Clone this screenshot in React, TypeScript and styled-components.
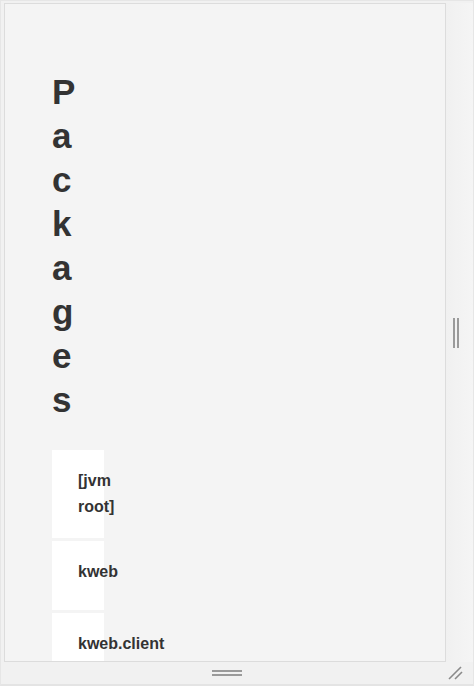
import React from "react";
import styled, { createGlobalStyle } from "styled-components";

const Global = createGlobalStyle`
  html, body { margin: 0; padding: 0; background: #f4f4f4; }
  body { font-family: "Liberation Sans", Arial, sans-serif; }
`;

const Frame = styled.div`
  width: 474px;
  height: 686px;
  box-sizing: border-box;
  border: 1px solid #e6e6e6;
  border-bottom: 2px solid #e4e4e4;
  background: #f1f1f1;
  display: grid;
  grid-template-columns: 1fr 27px;
  grid-template-rows: 1fr 22px;
  padding: 2px 0 0 3px;
`;

const Panel = styled.div`
  background: #f4f4f4;
  border: 1px solid #dcdcdc;
  overflow: hidden;
  padding: 66px 0 0 47px;
  box-sizing: border-box;
  min-height: 0;
`;

const Heading = styled.h1`
  margin: 0 0 28px;
  width: 1px;
  word-break: break-all;
  font-size: 35px;
  line-height: 44px;
  font-weight: 700;
  color: #333;
`;

const List = styled.ul`
  list-style: none;
  margin: 0;
  padding: 0;
  width: 52px;
  display: flex;
  flex-direction: column;
  gap: 3px;
`;

const Item = styled.li`
  background: #fff;
  box-sizing: border-box;
  min-height: 69px;
  padding: 18px 0 18px 26px;
  font-size: 16px;
  line-height: 26px;
  font-weight: 700;
  color: #333;
`;

const Label = styled.span`
  display: inline-block;
  width: 26px;
`;

const SideStrip = styled.div`
  display: flex;
  align-items: center;
  justify-content: flex-start;
  padding-left: 6px;
  background: linear-gradient(to right, #f0f0f0, #f5f5f5);
`;

const BottomStrip = styled.div`
  display: flex;
  align-items: center;
  justify-content: center;
  padding-left: 4px;
  background: #f1f1f1;
`;

const Corner = styled.div`
  display: flex;
  align-items: center;
  justify-content: flex-start;
  padding-left: 1px;
  background: #f1f1f1;
`;

const VGrip = () => (
  <svg width="8" height="30" viewBox="0 0 8 30">
    <rect x="1" y="0" width="2" height="30" fill="#9a9a9a" />
    <rect x="5" y="0" width="2" height="30" fill="#9a9a9a" />
  </svg>
);

const HGrip = () => (
  <svg width="30" height="8" viewBox="0 0 30 8">
    <rect x="0" y="1" width="30" height="2" fill="#9a9a9a" />
    <rect x="0" y="5" width="30" height="2" fill="#9a9a9a" />
  </svg>
);

const CornerGrip = () => (
  <svg width="16" height="14" viewBox="0 0 16 14">
    <line x1="2" y1="13" x2="14" y2="1" stroke="#8a8a8a" strokeWidth="1.6" />
    <line x1="8" y1="13" x2="15" y2="6" stroke="#8a8a8a" strokeWidth="1.6" />
  </svg>
);

const items = ["[jvm root]", "kweb", "kweb.client"];

export default function App() {
  return (
    <>
      <Global />
      <Frame>
        <Panel>
          <Heading>Packages</Heading>
          <List>
            {items.map((t) => (
              <Item key={t}>
                <Label>{t}</Label>
              </Item>
            ))}
          </List>
        </Panel>
        <SideStrip>
          <VGrip />
        </SideStrip>
        <BottomStrip>
          <HGrip />
        </BottomStrip>
        <Corner>
          <CornerGrip />
        </Corner>
      </Frame>
    </>
  );
}
